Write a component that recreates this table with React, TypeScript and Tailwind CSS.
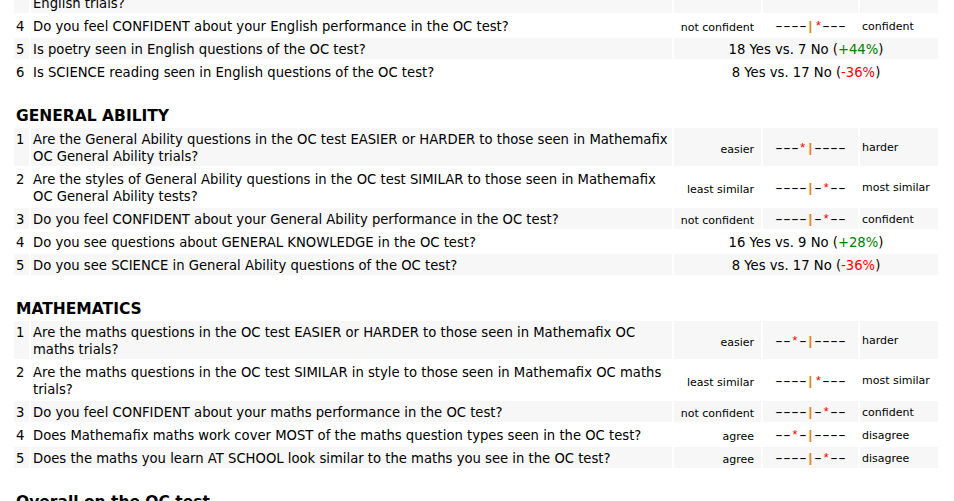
import React from "react";

type Base = { n: number; q: string[]; clippedTop?: boolean };
type ScaleRow = Base & { kind: "scale"; left: string; right: string; s: string };
type YnRow = Base & { kind: "yn"; yes: number; no: number; pct: string; up: boolean };
type Row = ScaleRow | YnRow;

const english: Row[] = [
  {
    n: 3,
    q: ["Are the styles of English questions in the OC test SIMILAR to those seen in Mathemafix OC", "English trials?"],
    kind: "scale",
    left: "least similar",
    right: "most similar",
    s: "----|-*--",
    clippedTop: true,
  },
  { n: 4, q: ["Do you feel CONFIDENT about your English performance in the OC test?"], kind: "scale", left: "not confident", right: "confident", s: "----|*---" },
  { n: 5, q: ["Is poetry seen in English questions of the OC test?"], kind: "yn", yes: 18, no: 7, pct: "+44%", up: true },
  { n: 6, q: ["Is SCIENCE reading seen in English questions of the OC test?"], kind: "yn", yes: 8, no: 17, pct: "-36%", up: false },
];

const general: Row[] = [
  {
    n: 1,
    q: ["Are the General Ability questions in the OC test EASIER or HARDER to those seen in Mathemafix", "OC General Ability trials?"],
    kind: "scale",
    left: "easier",
    right: "harder",
    s: "---*|----",
  },
  {
    n: 2,
    q: ["Are the styles of General Ability questions in the OC test SIMILAR to those seen in Mathemafix", "OC General Ability tests?"],
    kind: "scale",
    left: "least similar",
    right: "most similar",
    s: "----|-*--",
  },
  { n: 3, q: ["Do you feel CONFIDENT about your General Ability performance in the OC test?"], kind: "scale", left: "not confident", right: "confident", s: "----|-*--" },
  { n: 4, q: ["Do you see questions about GENERAL KNOWLEDGE in the OC test?"], kind: "yn", yes: 16, no: 9, pct: "+28%", up: true },
  { n: 5, q: ["Do you see SCIENCE in General Ability questions of the OC test?"], kind: "yn", yes: 8, no: 17, pct: "-36%", up: false },
];

const maths: Row[] = [
  {
    n: 1,
    q: ["Are the maths questions in the OC test EASIER or HARDER to those seen in Mathemafix OC", "maths trials?"],
    kind: "scale",
    left: "easier",
    right: "harder",
    s: "--*-|----",
  },
  {
    n: 2,
    q: ["Are the maths questions in the OC test SIMILAR in style to those seen in Mathemafix OC maths", "trials?"],
    kind: "scale",
    left: "least similar",
    right: "most similar",
    s: "----|*---",
  },
  { n: 3, q: ["Do you feel CONFIDENT about your maths performance in the OC test?"], kind: "scale", left: "not confident", right: "confident", s: "----|-*--" },
  { n: 4, q: ["Does Mathemafix maths work cover MOST of the maths question types seen in the OC test?"], kind: "scale", left: "agree", right: "disagree", s: "--*-|----" },
  { n: 5, q: ["Does the maths you learn AT SCHOOL look similar to the maths you see in the OC test?"], kind: "scale", left: "agree", right: "disagree", s: "----|-*--" },
];

function Scale({ s }: { s: string }) {
  return (
    <span className="font-['Liberation_Mono',monospace] whitespace-pre">
      {s.split("").map((c, i) =>
        c === "|" ? (
          <span key={i} className="inline-block w-[7.8px] text-center text-[#e8801c] font-bold">|</span>
        ) : c === "*" ? (
          <span key={i} className="inline-block w-[7.8px] text-center text-[#ff0000]">*</span>
        ) : (
          <span key={i} className="inline-block w-[7.8px] text-center scale-x-[1.6]">-</span>
        )
      )}
    </span>
  );
}

function QRow({ r }: { r: Row }) {
  const bg = r.n % 2 === 1 ? "bg-[#f7f7f7]" : "";
  const va = r.clippedTop ? "align-top" : "align-middle";
  return (
    <tr>
      <td className={`${bg} align-top pl-[2px] pr-0 pt-[3px] pb-px text-[13.2px] leading-[17px]`}>{r.n}</td>
      <td className={`${bg} align-top px-[2px] pt-[3px] pb-px text-[13.2px] leading-[17px] whitespace-nowrap`}>
        {r.q.map((line, i) => (
          <React.Fragment key={i}>
            {i > 0 && <br />}
            {line}
          </React.Fragment>
        ))}
      </td>
      {r.kind === "scale" ? (
        <>
          <td className={`${bg} ${va} text-right pr-[7px] pt-[4px] text-[11px] leading-[13px] whitespace-nowrap`}>{r.left}</td>
          <td className={`${bg} ${va} text-center pt-[1px] text-[13px] leading-[15px]`}>
            <Scale s={r.s} />
          </td>
          <td className={`${bg} ${va} text-left pl-[2px] pt-[1px] text-[11px] leading-[13px] whitespace-nowrap`}>{r.right}</td>
        </>
      ) : (
        <td colSpan={3} className={`${bg} align-top text-center pt-[3px] pb-px text-[13.2px] leading-[17px] whitespace-nowrap`}>
          {r.yes} Yes vs. {r.no} No (<span className={r.up ? "text-[#008000]" : "text-[#ff0000]"}>{r.pct}</span>)
        </td>
      )}
    </tr>
  );
}

function QTable({ rows, className = "" }: { rows: Row[]; className?: string }) {
  return (
    <table className={`ml-[12px] w-[928px] table-fixed border-separate border-spacing-[2px] ${className}`}>
      <colgroup>
        <col className="w-[15px]" />
        <col className="w-[641px]" />
        <col className="w-[87px]" />
        <col className="w-[95px]" />
        <col className="w-[78px]" />
      </colgroup>
      <tbody>
        {rows.map((r) => (
          <QRow key={r.n} r={r} />
        ))}
      </tbody>
    </table>
  );
}

function Heading({ children }: { children: React.ReactNode }) {
  return <h3 className="ml-4 mt-[24px] text-[15.5px] font-bold leading-[17px]">{children}</h3>;
}

export default function App() {
  return (
    <div className="w-[954px] h-[501px] overflow-hidden bg-white text-black font-['DejaVu_Sans',Verdana,sans-serif]">
      <div className="mt-[-27px]">
        <QTable rows={english} />
        <Heading>GENERAL ABILITY</Heading>
        <QTable rows={general} className="mt-px" />
        <Heading>MATHEMATICS</Heading>
        <QTable rows={maths} className="mt-px" />
        <Heading>Overall on the OC test</Heading>
      </div>
    </div>
  );
}
